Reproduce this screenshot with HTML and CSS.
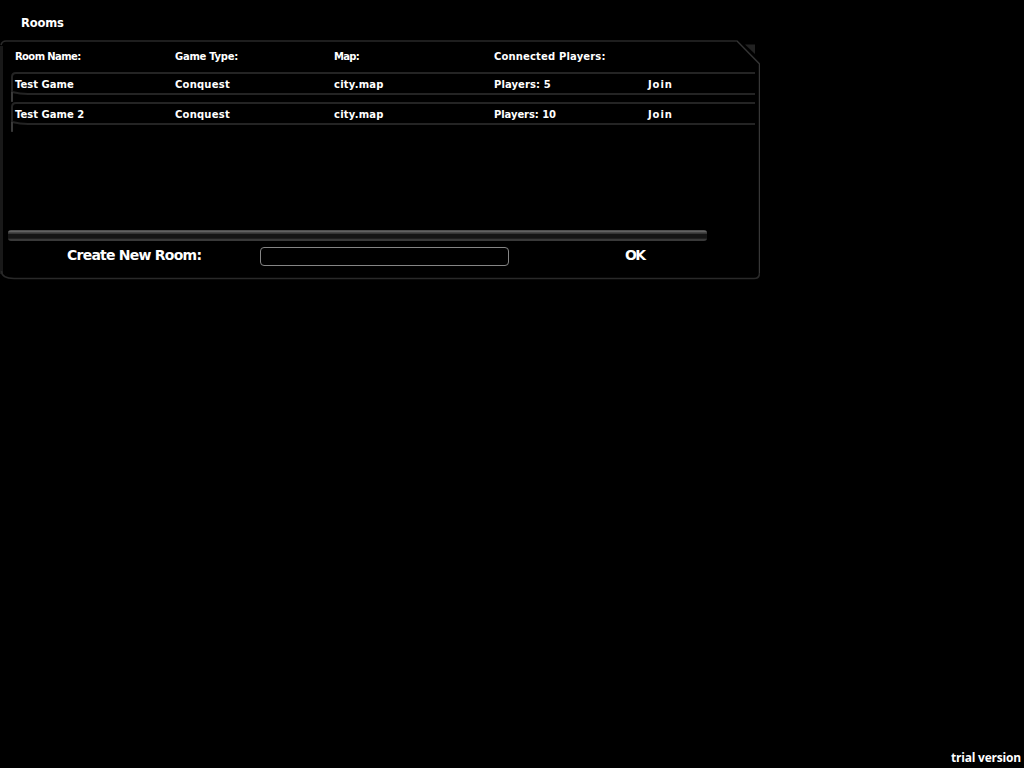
FILE: index.html
```html
<!DOCTYPE html>
<html lang="en">
<head>
<meta charset="utf-8">
<title>Rooms</title>
<link rel="stylesheet" href="styles.css">
</head>
<body>
<main class="lobby">
  <h1 class="title">Rooms</h1>
  <section class="panel">
    <svg class="frame" width="760" height="240" viewBox="0 0 760 240" fill="none">
      <path d="M1.500 234V6" stroke="#191919" stroke-width="3"/>
      <path d="M1 5Q2 1 6 1H737L759.500 24V233Q759.500 238.500 754 238.500H14Q1.500 238.500 1.500 231" stroke="#292929" stroke-width="1.600"/>
      <path d="M737 1L759.500 24V233" stroke="#373737"/>
      <path d="M745 4.500H755V14Z" fill="#222"/>
    </svg>
    <div class="row head">
      <span class="w-room">Room Name:</span><span class="w-type">Game Type:</span><span class="w-map">Map:</span><span class="w-players">Connected Players:</span>
    </div>
    <div class="row game">
      <svg class="frame" width="744" height="30" viewBox="0 0 744 30" fill="none">
        <path d="M1 29V5Q1 1 5 1H744M1 20Q9 22 17 22H744" stroke="#242424" stroke-width="2"/>
        <path d="M1 20V30" stroke="#414141" stroke-width="1.500"/>
      </svg>
      <span class="w-test">Test Game</span><span class="w-conq">Conquest</span><span class="w-city">city.map</span><span class="w-five">Players: 5</span><span class="w-join">Join</span>
    </div>
    <div class="row game">
      <svg class="frame" width="744" height="30" viewBox="0 0 744 30" fill="none">
        <path d="M1 29V5Q1 1 5 1H744M1 20Q9 22 17 22H744" stroke="#242424" stroke-width="2"/>
        <path d="M1 20V30" stroke="#414141" stroke-width="1.500"/>
      </svg>
      <span class="w-test2">Test Game 2</span><span class="w-conq">Conquest</span><span class="w-city">city.map</span><span class="w-ten">Players: 10</span><span class="w-join">Join</span>
    </div>
    <div class="scrollbar"></div>
    <div class="create">
      <label class="create-label" for="room">Create New Room:</label>
      <input class="field" id="room" type="text">
      <span class="ok">OK</span>
    </div>
  </section>
  <footer class="trial">trial version</footer>
</main>
</body>
</html>
```

FILE: styles.css
```css
* { box-sizing: border-box; }
body { margin: 0; background: #000; color: #fff; font-family: "DejaVu Sans", sans-serif; font-weight: 700; }
.lobby { width: 1024px; height: 768px; overflow: hidden; display: flex; flex-direction: column; }
.title { margin: 0; height: 40px; padding: 14px 0 0 21px; font-size: 11.5px; line-height: 18px; letter-spacing: -0.15px; }
.panel { position: relative; width: 760px; height: 240px; padding-top: 2px; }
.frame { position: absolute; left: 0; top: 0; display: block; }
.row { position: relative; display: grid; grid-template-columns: 160px 159px 160px 154px 1fr; height: 30px; margin-left: 11px; padding: 5px 0 0 4px; font-size: 10px; line-height: 16px; white-space: nowrap; width: 744px; }
.row.head { padding-top: 7px; }
.w-room { letter-spacing: -0.6px; }
.w-type { letter-spacing: -0.28px; }
.w-map { letter-spacing: -0.7px; }
.w-players { letter-spacing: 0.16px; }
.w-test, .w-test2 { letter-spacing: 0.02px; }
.w-conq { letter-spacing: 0.22px; }
.w-city { letter-spacing: 0.23px; }
.w-five { letter-spacing: 0.1px; }
.w-ten { letter-spacing: -0.08px; }
.w-join { letter-spacing: 0.9px; }
.scrollbar { width: 699px; height: 11px; margin: 98px 0 0 8px; border-radius: 3px; background: linear-gradient(#505050 0 1px, #626262 1px 2px, #454545 2px 3px, #353535 3px 4px, #151515 4px 8px, #202020 8px 9px, #393939 9px 11px); }
.create { display: grid; grid-template-columns: 193px 365px 1fr; height: 32px; padding: 6px 0 0 67px; font-size: 14px; line-height: 17px; white-space: nowrap; }
.create-label { letter-spacing: -0.76px; }
.field { width: 249px; height: 19px; padding: 0 5px; border: 1px solid #858585; border-radius: 4px; background: #000; color: #fff; font: inherit; font-size: 11px; outline: 0; }
.ok { letter-spacing: -1.6px; }
.trial { margin-top: auto; padding-right: 3px; font-family: "Open Sans", sans-serif; font-size: 12px; line-height: 20px; letter-spacing: -0.2px; text-align: right; }
```
